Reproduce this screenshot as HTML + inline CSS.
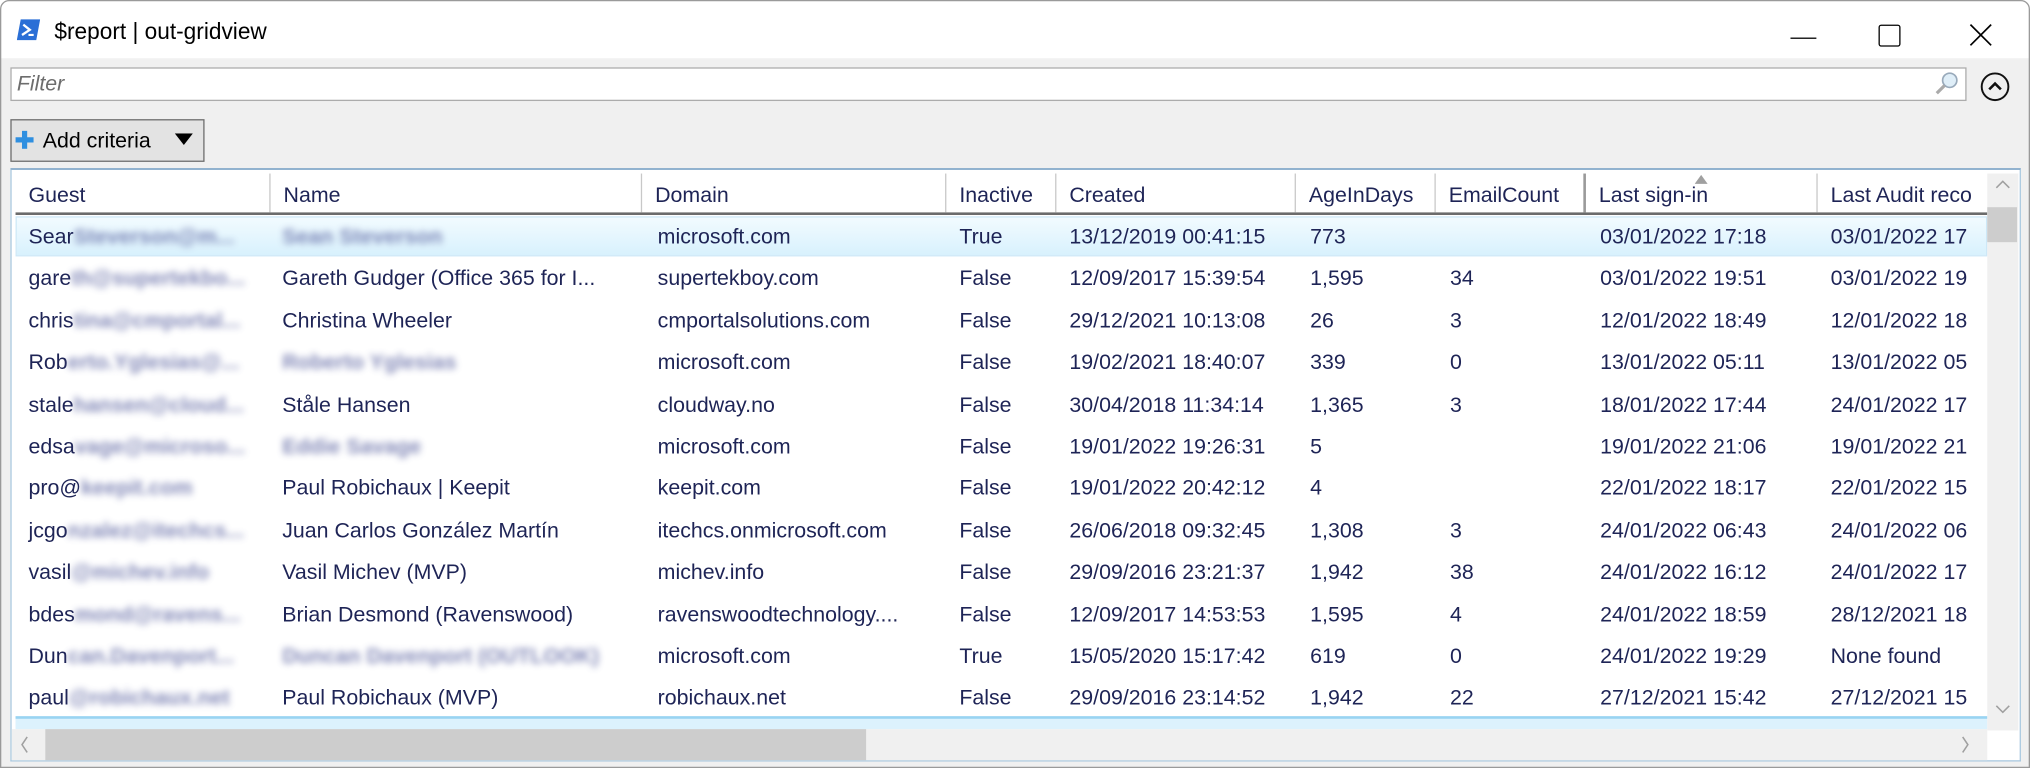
<!DOCTYPE html>
<html><head><meta charset="utf-8"><style>
html,body{margin:0;padding:0;width:2030px;height:768px;overflow:hidden;background:#fff}
#s{position:absolute;left:0;top:0;width:1568px;height:593px;transform:scale(1.29464,1.2951);transform-origin:0 0;font-family:"Liberation Sans",sans-serif;color:#1e2456;background:#f0f0f0;overflow:hidden}
.a{position:absolute}
.t{position:absolute;font-size:16.5px;white-space:nowrap;line-height:20px}
.b{filter:blur(2.6px);color:#5a62a0;font-weight:bold;opacity:.75}
.hd{position:absolute;top:134px;height:30px;border-right:1px solid #c8c8c8;box-sizing:border-box;font-size:16.5px;line-height:34px;padding-left:10px;white-space:nowrap;overflow:hidden}
</style></head><body><div id="s">
<div class="a" style="left:0;top:0;width:1568px;height:45px;background:#fff;border-bottom:1px solid #f0f0f0"></div>
<div class="a" style="left:0;top:0;width:1568px;height:593px;border:1px solid #9a9a9a;box-sizing:border-box;border-radius:7px 7px 0 0;pointer-events:none;z-index:5"></div>
<svg class="a" style="left:13px;top:14px" width="18" height="18" viewBox="0 0 18 18"><path d="M3 1h15l-3 16H0z" fill="#2b6fd6"/><path d="M5 5l5 4-6 4" stroke="#fff" stroke-width="1.8" fill="none"/><path d="M9 13h4" stroke="#fff" stroke-width="1.6"/></svg>
<div class="t" style="left:42px;top:14px;color:#000;font-size:17.5px">$report | out-gridview</div>
<div class="a" style="left:1383px;top:29px;width:20px;height:1.3px;background:#000"></div>
<div class="a" style="left:1451px;top:19px;width:15px;height:15px;border:1.3px solid #000;border-radius:2px"></div>
<svg class="a" style="left:1520px;top:17px" width="20" height="20"><path d="M2 2L18 18M18 2L2 18" stroke="#000" stroke-width="1.3"/></svg>
<div class="a" style="left:8px;top:52px;width:1511px;height:26px;background:#fff;border:1px solid #acacac;box-sizing:border-box"></div>
<div class="t" style="left:13px;top:55px;font-style:italic;color:#6d6d6d">Filter</div>
<svg class="a" style="left:1493px;top:54px" width="22" height="22"><circle cx="13" cy="8" r="5.5" fill="#dfeef8" stroke="#9ab" stroke-width="1.3"/><path d="M9 12L3 18" stroke="#aaa" stroke-width="2.5"/></svg>
<svg class="a" style="left:1529px;top:55px" width="24" height="24"><circle cx="12" cy="12" r="10.3" fill="none" stroke="#111" stroke-width="1.5"/><path d="M7.5 14l4.5-4.5 4.5 4.5" fill="none" stroke="#111" stroke-width="2"/></svg>
<div class="a" style="left:8px;top:92px;width:150px;height:33px;background:#e3e3e3;border:1.5px solid #6e6e6e;box-sizing:border-box"></div>
<svg class="a" style="left:12px;top:101px" width="14" height="14"><path d="M5 0h4v5h5v4H9v5H5V9H0V5h5z" fill="#2f8fe0"/></svg>
<div class="t" style="left:33px;top:99px;color:#000">Add criteria</div>
<svg class="a" style="left:135px;top:103px" width="14" height="10"><path d="M0 0h14L7 9z" fill="#000"/></svg>
<div class="a" style="left:8px;top:130px;width:1553px;height:458px;background:#fff;border:1px solid #a9c8df;border-top:1.5px solid #5a8cb8;box-sizing:border-box"></div>
<div class="a" style="left:12px;top:164px;width:1523px;height:2px;background:#6b6b6b"></div>
<div class="hd" style="left:12px;width:197px">Guest</div>
<div class="hd" style="left:209px;width:287px">Name</div>
<div class="hd" style="left:496px;width:235px">Domain</div>
<div class="hd" style="left:731px;width:85px">Inactive</div>
<div class="hd" style="left:816px;width:185px">Created</div>
<div class="hd" style="left:1001px;width:108px">AgeInDays</div>
<div class="hd" style="left:1109px;width:116px;border-right:2px solid #9a9a9a">EmailCount</div>
<div class="hd" style="left:1225px;width:179px">Last sign-in</div>
<div class="hd" style="left:1404px;width:131px;border-right:none">Last Audit reco</div>
<svg class="a" style="left:1309px;top:135px" width="10" height="8"><path d="M0 7h10L5 0z" fill="#a0a0a0"/></svg>
<div class="a" style="left:12px;top:167px;width:1523px;height:31px;background:linear-gradient(#f2fbff,#d8f1fd);border:1px solid #cde8f7;box-sizing:border-box"></div>
<div class="a" style="left:12px;top:553px;width:1523px;height:10px;background:#dcf2fd;border-top:2px solid #99d4f2;box-sizing:border-box"></div>
<div id="rows"></div>
<div class="a" style="left:1535px;top:134px;width:24px;height:430px;background:#f0f0f0"></div>
<div class="a" style="left:1535px;top:160px;width:23px;height:27px;background:#cdcdcd"></div>
<svg class="a" style="left:1541px;top:138px" width="12" height="10"><path d="M1 7l5-5 5 5" fill="none" stroke="#a0a0a0" stroke-width="1.2"/></svg>
<svg class="a" style="left:1541px;top:543px" width="12" height="10"><path d="M1 2l5 5 5-5" fill="none" stroke="#a0a0a0" stroke-width="1.2"/></svg>
<div class="a" style="left:9px;top:563px;width:1526px;height:24px;background:#f0f0f0"></div>
<div class="a" style="left:35px;top:563px;width:634px;height:24px;background:#cdcdcd"></div>
<svg class="a" style="left:14px;top:568px" width="10" height="14"><path d="M7 1L3 7l4 6" fill="none" stroke="#a0a0a0" stroke-width="1.2"/></svg>
<svg class="a" style="left:1513px;top:568px" width="10" height="14"><path d="M3 1l4 6-4 6" fill="none" stroke="#a0a0a0" stroke-width="1.2"/></svg>
<script>
var R=[
["Sear","Steverson@m...",null,"Sean Steverson","microsoft.com","True","13/12/2019 00:41:15","773","","03/01/2022 17:18","03/01/2022 17"],
["gare","th@supertekbo...","Gareth Gudger (Office 365 for I...",null,"supertekboy.com","False","12/09/2017 15:39:54","1,595","34","03/01/2022 19:51","03/01/2022 19"],
["chris","tina@cmportal...","Christina Wheeler",null,"cmportalsolutions.com","False","29/12/2021 10:13:08","26","3","12/01/2022 18:49","12/01/2022 18"],
["Rob","erto.Yglesias@...",null,"Roberto Yglesias","microsoft.com","False","19/02/2021 18:40:07","339","0","13/01/2022 05:11","13/01/2022 05"],
["stale","hansen@cloud...","Ståle Hansen",null,"cloudway.no","False","30/04/2018 11:34:14","1,365","3","18/01/2022 17:44","24/01/2022 17"],
["edsa","vage@microso...",null,"Eddie Savage","microsoft.com","False","19/01/2022 19:26:31","5","","19/01/2022 21:06","19/01/2022 21"],
["pro@","keepit.com","Paul Robichaux | Keepit",null,"keepit.com","False","19/01/2022 20:42:12","4","","22/01/2022 18:17","22/01/2022 15"],
["jcgo","nzalez@itechcs...","Juan Carlos González Martín",null,"itechcs.onmicrosoft.com","False","26/06/2018 09:32:45","1,308","3","24/01/2022 06:43","24/01/2022 06"],
["vasil","@michev.info","Vasil Michev (MVP)",null,"michev.info","False","29/09/2016 23:21:37","1,942","38","24/01/2022 16:12","24/01/2022 17"],
["bdes","mond@ravens...","Brian Desmond (Ravenswood)",null,"ravenswoodtechnology....","False","12/09/2017 14:53:53","1,595","4","24/01/2022 18:59","28/12/2021 18"],
["Dun","can.Davenport...",null,"Duncan Davenport (OUTLOOK)","microsoft.com","True","15/05/2020 15:17:42","619","0","24/01/2022 19:29","None found"],
["paul","@robichaux.net","Paul Robichaux (MVP)",null,"robichaux.net","False","29/09/2016 23:14:52","1,942","22","27/12/2021 15:42","27/12/2021 15"]];
var X=[508,741,826,1012,1120,1236,1414],h="";
R.forEach(function(r,i){var y=173+i*32.4;
h+='<div class="t" style="left:22px;top:'+y+'px">'+r[0]+'<span class="b">'+r[1]+'</span></div>';
if(r[2])h+='<div class="t" style="left:218px;top:'+y+'px">'+r[2]+'</div>';
else h+='<div class="t b" style="left:218px;top:'+y+'px">'+r[3]+'</div>';
for(var k=0;k<7;k++)h+='<div class="t" style="left:'+X[k]+'px;top:'+y+'px;'+(k==6?'width:121px;overflow:hidden':'')+'">'+r[4+k]+'</div>';});
document.getElementById("rows").outerHTML=h;
</script>
</div></body></html>
